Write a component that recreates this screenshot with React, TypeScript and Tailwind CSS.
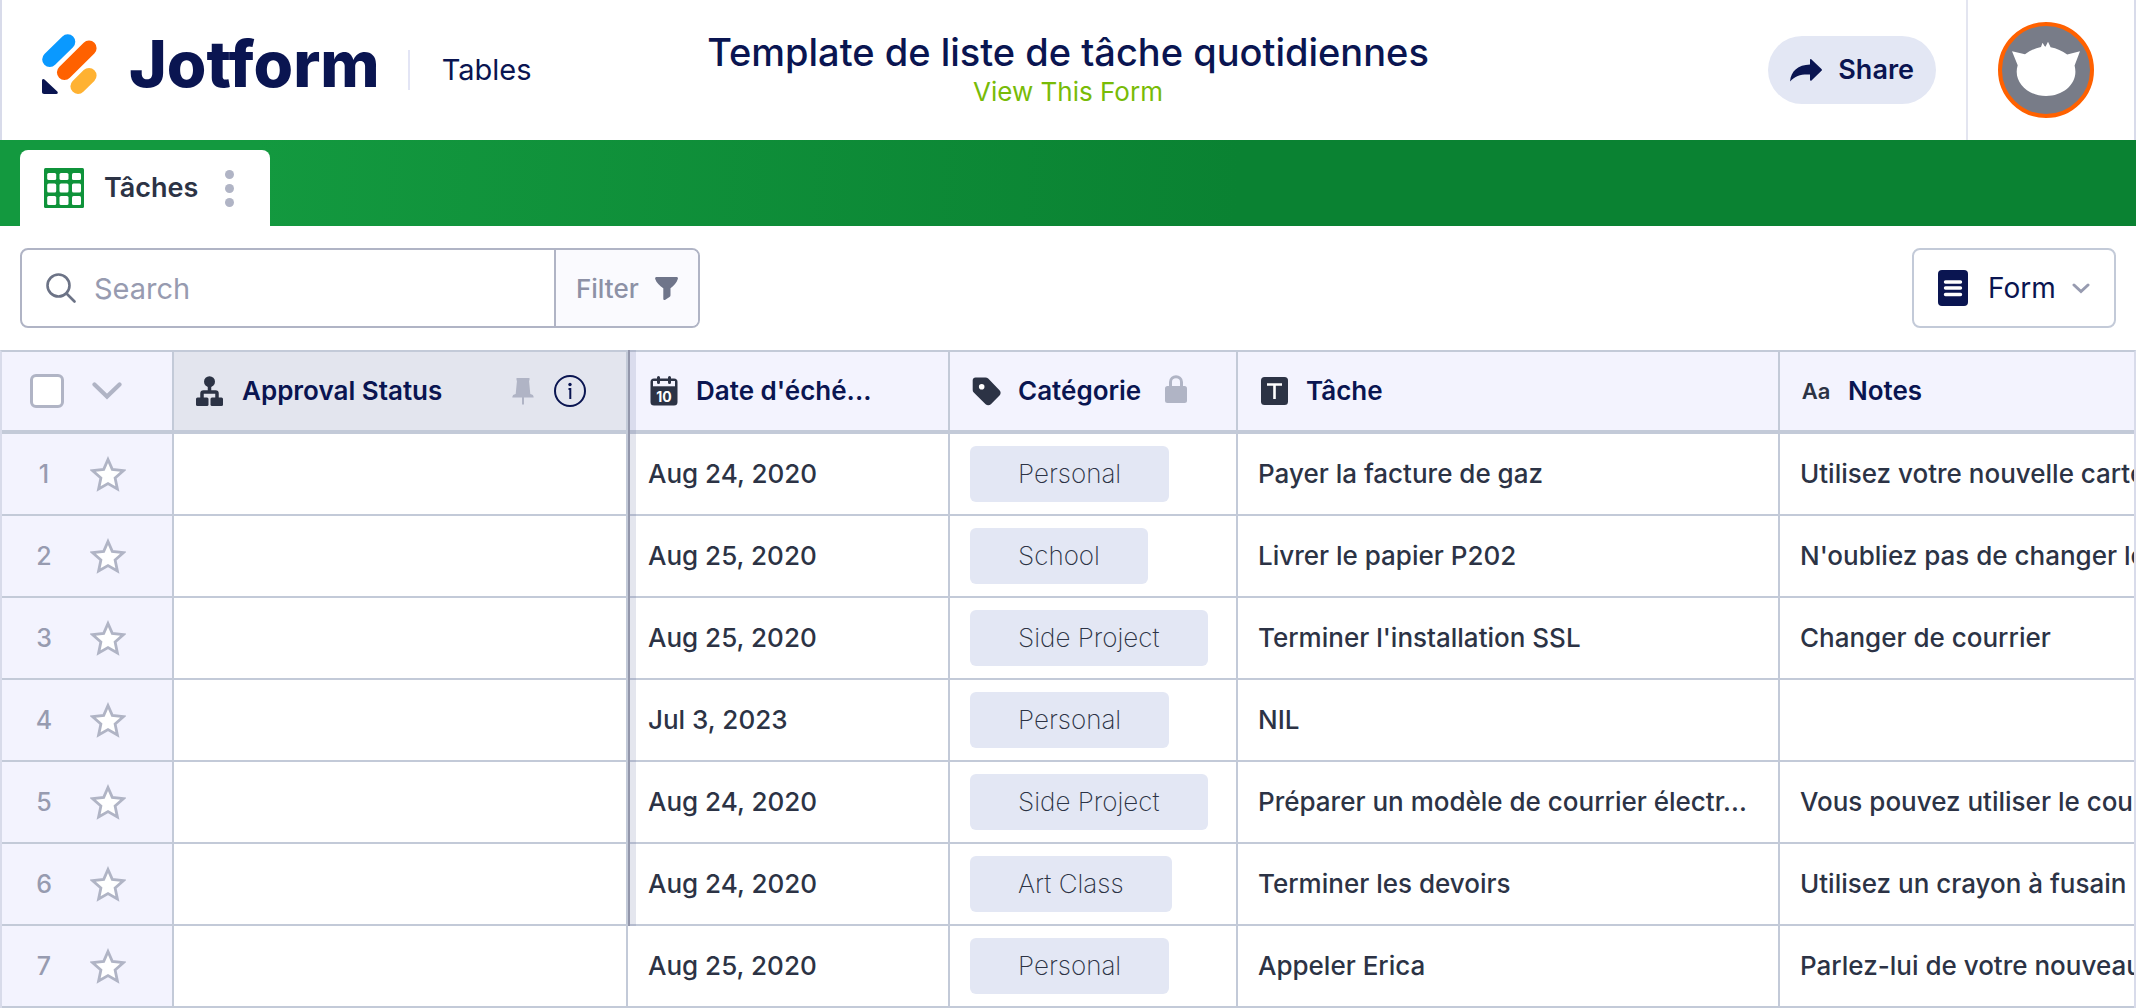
import type { ReactNode } from 'react'

interface Task {
  id: number
  date: string
  category: string
  task: string
  notes: string
}

const TASKS: Task[] = [
  { id: 1, date: 'Aug 24, 2020', category: 'Personal', task: 'Payer la facture de gaz', notes: 'Utilisez votre nouvelle carte' },
  { id: 2, date: 'Aug 25, 2020', category: 'School', task: 'Livrer le papier P202', notes: "N'oubliez pas de changer le" },
  { id: 3, date: 'Aug 25, 2020', category: 'Side Project', task: "Terminer l'installation SSL", notes: 'Changer de courrier' },
  { id: 4, date: 'Jul 3, 2023', category: 'Personal', task: 'NIL', notes: '' },
  { id: 5, date: 'Aug 24, 2020', category: 'Side Project', task: 'Préparer un modèle de courrier électr...', notes: 'Vous pouvez utiliser le cou' },
  { id: 6, date: 'Aug 24, 2020', category: 'Art Class', task: 'Terminer les devoirs', notes: 'Utilisez un crayon à fusain' },
  { id: 7, date: 'Aug 25, 2020', category: 'Personal', task: 'Appeler Erica', notes: 'Parlez-lui de votre nouveau' },
]

function LogoMark() {
  return (
    <svg width="55" height="60" viewBox="0 0 55 60" fill="none" strokeWidth="15.2" strokeLinecap="round">
      <path d="M25.7 7.8 7.8 25.4" stroke="#0a99ff" />
      <path d="M47 14.2 22.5 38.3" stroke="#ff6100" />
      <path d="M47 41.5 36 52.3" stroke="#ffb232" />
      <path d="M0 46.5c0-1.5 1.5-2 2.5-1l12.8 12c1 1 .4 2.5-1 2.5H2.2C.8 60 0 59.2 0 58Z" fill="#0a1551" stroke="none" />
    </svg>
  )
}

function Avatar() {
  return (
    <svg width="96" height="96" viewBox="0 0 96 96">
      <circle cx="48" cy="48" r="46" fill="#787c88" stroke="#ff6100" strokeWidth="4" />
      <path
        d="M14 29.3 27 32.3C32 28.5 37.5 26 43 25l1.5-4.3 2 3.2 1 .8 2.5-5 2.6 5.6c6 1 11.6 3.6 16.6 7.2L82 29.3 76.6 43.500c.5 2.2.8 4.3.8 6.3 0 13.500-13 24.200-29.300 24.200S18.700 63.300 18.700 49.800c0-2.200.3-4.500 1-6.600Z"
        fill="#fff"
      />
    </svg>
  )
}

function ShareIcon() {
  return (
    <svg width="32" height="23" viewBox="0 0 32 23" fill="#0a1551">
      <path d="M0 22.5C1 12 8 5.8 20 5.5V1c0-1 .8-1.2 1.5-.5l10 9.500c.6.6.6 1.200 0 1.800l-10 9.600c-.7.6-1.500.3-1.500-.6v-5.300C11.500 15 5.500 16.500 0 22.500Z" />
    </svg>
  )
}

function SheetIcon() {
  return (
    <svg width="40" height="40" viewBox="0 0 40 40">
      <rect width="40" height="40" rx="1.5" fill="#0f933a" />
      {[5, 15.5, 28].map((y) =>
        [3.2, 15.5, 28].map((x) => <rect key={`${x}-${y}`} x={x} y={y} width="9" height={y === 5 ? 7 : 9} rx="1.5" fill="#fff" />),
      )}
    </svg>
  )
}

function SearchIcon() {
  return (
    <svg width="30" height="30" viewBox="0 0 30 30" fill="none" stroke="#6c7386" strokeWidth="2.6" strokeLinecap="round">
      <circle cx="12.5" cy="12.5" r="11" />
      <path d="m20.5 20.5 8 8" />
    </svg>
  )
}

function FunnelIcon() {
  return (
    <svg width="23" height="23" viewBox="0 0 23 23" fill="#6f758a">
      <path d="M1.5 0h20c1.2 0 1.7 1 1.300 2-1.200 3.800-3.800 6.700-7.300 9.200v7c0 .8-.3 1.400-1 1.800l-4.200 2.700c-1 .6-2 .1-2-1V11.200C4.500 8.700 1.500 5.800.2 2-.1 1 .4 0 1.500 0Z" />
    </svg>
  )
}

function FormIcon() {
  return (
    <svg width="30" height="36" viewBox="0 0 30 36">
      <rect width="30" height="36" rx="4" fill="#0a1551" />
      <path d="M7.5 12h15M7.5 18h15M7.5 24.500h15" stroke="#fff" strokeWidth="3.4" strokeLinecap="round" />
    </svg>
  )
}

function ApprovalIcon() {
  return (
    <svg width="28" height="30" viewBox="0 0 28 30" fill="#2c3345">
      <circle cx="13.5" cy="5.7" r="5.5" />
      <path d="M13.5 9v8M6 22.500v-5c0-.8.500-1.500 1.500-1.500h12c1 0 1.500.7 1.500 1.500v5" fill="none" stroke="#2c3345" strokeWidth="3.5" />
      <rect x="0" y="21.5" width="12.5" height="8.5" rx="1.5" />
      <rect x="14.5" y="21.5" width="12.5" height="8.5" rx="1.5" />
    </svg>
  )
}

function CalendarIcon() {
  return (
    <svg width="28" height="30" viewBox="0 0 28 30">
      <rect x="0.5" y="2.5" width="27" height="27" rx="3.5" fill="#2c3345" />
      <path d="M3 5h22v5.300H3Z" fill="#f3f3fe" />
      <path d="M8.5 1.500v5M19.500 1.500v5" stroke="#2c3345" strokeWidth="3" strokeLinecap="round" />
      <text x="14" y="25.5" textAnchor="middle" fontSize="14" fontWeight="700" fill="#fff">10</text>
    </svg>
  )
}

function TagIcon() {
  return (
    <svg width="29" height="29" viewBox="0 0 29 29">
      <path d="M3.5.5h10c1 0 2 .4 2.700 1.100l11.300 11.600c1.500 1.500 1.500 3.700 0 5.200l-8.600 8.800c-1.500 1.500-3.800 1.500-5.300 0L2 15.800c-.9-.8-1.300-1.800-1.300-3V3.300C.7 1.700 1.900.5 3.500.5Z" fill="#2c3345" />
      <circle cx="9.7" cy="9.8" r="2.8" fill="#fff" />
    </svg>
  )
}

function TextIcon() {
  return (
    <svg width="27" height="28" viewBox="0 0 27 28">
      <rect width="27" height="28" rx="3.5" fill="#2c3345" />
      <path d="M6 7.500h15M13.500 7.500v14.500" stroke="#fff" strokeWidth="2.6" />
    </svg>
  )
}

function PinIcon() {
  return (
    <svg width="22" height="27" viewBox="0 0 22 27" fill="#b0b4c5">
      <path d="M4.5 0h13v2.500H17l1.300 13.500c2.200.3 3.400 1.500 3.400 3.500H.3c0-2 1.200-3.200 3.400-3.500L5 2.500H4.500ZM10 19h2v7.500h-2Z" />
    </svg>
  )
}

function InfoIcon() {
  return (
    <svg width="32" height="32" viewBox="0 0 32 32" fill="none" stroke="#0a1551">
      <circle cx="16" cy="16" r="15" strokeWidth="2" />
      <path d="M14.5 14h1.800v10" strokeWidth="2" />
      <circle cx="16" cy="9.5" r="1.7" fill="#0a1551" stroke="none" />
    </svg>
  )
}

function LockIcon() {
  return (
    <svg width="22" height="28" viewBox="0 0 22 28">
      <path d="M5.5 13V7c0-7 11-7 11 0v6" fill="none" stroke="#b0b4c5" strokeWidth="3" />
      <rect y="11" width="22" height="17" rx="2.5" fill="#b0b4c5" />
    </svg>
  )
}

function StarIcon() {
  return (
    <svg width="36" height="36" viewBox="0 0 36 36">
      <path d="m18 3.500 4.300 9.900 11 1.300-8.200 7.300 2.300 11L18 27.500 8.600 33l2.300-11-8.200-7.300 11-1.300Z" fill="#fff" stroke="#b0b4c5" strokeWidth="2.8" />
    </svg>
  )
}

interface ColumnHeaderProps {
  icon: ReactNode
  label: string
  className?: string
  children?: ReactNode
}

function ColumnHeader({ icon, label, className = 'bg-[#f3f3fe]', children }: ColumnHeaderProps) {
  return (
    <th scope="col" className={`relative h-[82px] border-r-2 border-b-4 border-[#c3cad8] p-0 last:border-r-0 ${className}`}>
      <div className="flex items-center px-5 text-[26px] leading-8 font-semibold whitespace-nowrap text-[#0a1551]">
        <span className="mr-4 flex w-8 shrink-0 justify-center">{icon}</span>
        {label}
        {children}
      </div>
    </th>
  )
}

export default function App() {
  return (
    <div className="overflow-hidden bg-white font-['Inter',sans-serif] text-[#2c3345]">
      <header className="grid h-[140px] grid-cols-[1fr_auto_1fr] border-x-2 border-[#d8dbea]">
        <div className="flex items-center pl-10">
          <a href="#" className="flex items-center gap-8 pb-3">
            <LogoMark />
            <span className="text-[64px] leading-none font-extrabold text-[#0a1551]">Jotform</span>
          </a>
          <span className="mr-8 ml-7 h-10 w-0.5 bg-[#e3e5f5]" />
          <span className="text-[29px] leading-10 text-[#0a1551]">Tables</span>
        </div>
        <div className="flex flex-col items-center justify-center pt-1">
          <h1 className="text-[38px] leading-10 font-medium text-[#0a1551]">Template de liste de tâche quotidiennes</h1>
          <a href="#" className="text-[26px] leading-10 text-[#78bb07]">View This Form</a>
        </div>
        <div className="flex items-center justify-end">
          <button className="mr-[30px] flex h-[68px] items-center gap-4 rounded-full bg-[#e3e7f4] px-[22px] text-[27px] font-semibold text-[#0a1551]">
            <ShareIcon />
            Share
          </button>
          <div className="flex h-full items-center border-l-2 border-[#e3e5f0] pr-10 pl-[30px]">
            <button aria-label="Account">
              <Avatar />
            </button>
          </div>
        </div>
      </header>

      <nav className="flex h-[86px] items-end bg-[linear-gradient(93deg,#13993f_12%,#0a8232_58%)] px-5">
        <div className="flex h-[76px] w-[250px] items-center rounded-t-lg bg-white pl-6">
          <SheetIcon />
          <a href="#" className="mr-auto ml-5 text-[27px] leading-10 font-semibold">Tâches</a>
          <button aria-label="Tab options" className="mr-9 flex flex-col gap-[5px]">
            <span className="size-[9px] rounded-full bg-[#b0b4c5]" />
            <span className="size-[9px] rounded-full bg-[#b0b4c5]" />
            <span className="size-[9px] rounded-full bg-[#b0b4c5]" />
          </button>
        </div>
      </nav>

      <div className="flex items-center justify-between px-5 py-[22px]">
        <div className="flex h-20 w-[680px] overflow-hidden rounded-lg border-2 border-[#b0b4c5]">
          <label className="flex flex-1 items-center gap-[18px] pl-6">
            <SearchIcon />
            <input
              type="text"
              aria-label="Search"
              placeholder="Search"
              className="h-full min-w-0 flex-1 text-[29px] outline-none placeholder:text-[#979bb0]"
            />
          </label>
          <button className="flex w-36 items-center justify-between border-l-2 border-[#b0b4c5] bg-[#fafafe] px-5 text-[26px] font-medium text-[#8d91a6]">
            Filter
            <FunnelIcon />
          </button>
        </div>
        <label className="flex h-20 items-center rounded-lg border-2 border-[#c3cad8] px-6">
          <FormIcon />
          <select aria-label="View" className="mr-4 ml-5 appearance-none bg-transparent text-[28px] text-[#0a1551] outline-none">
            <option>Form</option>
          </select>
          <svg width="18" height="11" viewBox="0 0 18 11" fill="none" stroke="#979bb0" strokeWidth="3" strokeLinecap="round">
            <path d="m2 2 7 6.500L16 2" />
          </svg>
        </label>
      </div>

      <div className="border-x-2 border-t-2 border-x-[#d8dbea] border-t-[#c3cad8]">
        <table className="w-full table-fixed border-separate border-spacing-0 text-left">
          <colgroup>
            <col className="w-[172px]" />
            <col className="w-[454px]" />
            <col className="w-[322px]" />
            <col className="w-[288px]" />
            <col className="w-[542px]" />
            <col />
          </colgroup>
          <thead>
            <tr>
              <th scope="col" className="h-[82px] border-r-2 border-b-4 border-[#c3cad8] bg-[#f3f3fe] p-0">
                <div className="flex items-center gap-7 pl-7">
                  <input
                    type="checkbox"
                    aria-label="Select all rows"
                    className="size-[34px] shrink-0 appearance-none rounded-md border-[3px] border-[#b0b4c5] bg-white"
                  />
                  <button aria-label="Row options">
                    <svg width="30" height="18" viewBox="0 0 30 18" fill="none" stroke="#b0b4c5" strokeWidth="4.2" strokeLinecap="round">
                      <path d="m2.5 2.500 12.500 12 12.500-12" />
                    </svg>
                  </button>
                </div>
              </th>
              <ColumnHeader icon={<ApprovalIcon />} label="Approval Status" className="bg-[#e3e5ee]">
                <span className="mr-5 ml-auto flex items-center gap-5">
                  <PinIcon />
                  <InfoIcon />
                </span>
              </ColumnHeader>
              <ColumnHeader icon={<CalendarIcon />} label="Date d'éché...">
                {/* edge of the frozen columns, down to the sixth row */}
                <span className="pointer-events-none absolute -top-0.5 left-0 z-10 h-[576px] w-2 border-l-2 border-[#9397ab] bg-[#7a84aa]/20" />
              </ColumnHeader>
              <ColumnHeader icon={<TagIcon />} label="Catégorie">
                <span className="ml-6 pb-1">
                  <LockIcon />
                </span>
              </ColumnHeader>
              <ColumnHeader icon={<TextIcon />} label="Tâche" />
              <ColumnHeader icon={<span className="text-[22px] text-[#2c3345]">Aa</span>} label="Notes" />
            </tr>
          </thead>
          <tbody className="text-[26px] leading-8 font-medium whitespace-nowrap [&_td]:h-[82px] [&_td]:overflow-hidden [&_td]:border-r-2 [&_td]:border-b-2 [&_td]:border-[#c3cad8] [&_td]:px-5 [&_td]:py-0 [&_td:last-child]:border-r-0">
            {TASKS.map((row) => (
              <tr key={row.id}>
                <td className="bg-[#f3f3fe]">
                  <div className="flex items-center gap-[34px] pl-[10px]">
                    <span className="w-6 text-center text-[25px] text-[#979bb0]">{row.id}</span>
                    <button aria-label="Star row">
                      <StarIcon />
                    </button>
                  </div>
                </td>
                <td />
                <td>{row.date}</td>
                <td>
                  <span className="inline-flex h-14 items-center rounded-md bg-[#e3e7f4] px-12 align-middle font-extralight">
                    {row.category}
                  </span>
                </td>
                <td>{row.task}</td>
                <td>{row.notes}</td>
              </tr>
            ))}
          </tbody>
        </table>
      </div>
    </div>
  )
}
